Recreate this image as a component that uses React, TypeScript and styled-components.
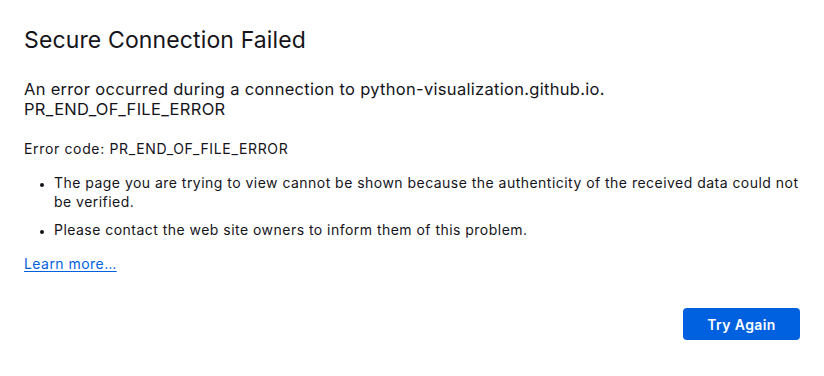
import React from "react";
import styled, { createGlobalStyle } from "styled-components";

const Global = createGlobalStyle`
  html, body { margin: 0; padding: 0; background: #ffffff; }
  body { font-family: Inter, "Noto Sans", "Liberation Sans", sans-serif; color: #15141a; }
`;

const Page = styled.main`
  box-sizing: border-box;
  width: 824px;
  height: 376px;
  padding: 24px 12px 0 24px;
  display: flex;
  flex-direction: column;
`;

const Title = styled.h1`
  margin: 0;
  font-size: 23px;
  font-weight: 400;
  line-height: 32px;
  letter-spacing: 0.13px;
`;

const Lead = styled.p`
  margin: 24px 0 0 0;
  font-size: 16.5px;
  line-height: 19.5px;
  font-weight: 400;
  letter-spacing: 0.3px;
`;

const Code = styled.p`
  margin: 21px 0 0 0;
  font-size: 14px;
  line-height: 18px;
  letter-spacing: 0.65px;
`;

const List = styled.ul`
  margin: 15px 0 0 0;
  padding: 0 0 0 30px;
  font-size: 14px;
  line-height: 19px;
  letter-spacing: 0.47px;
  display: flex;
  flex-direction: column;
  gap: 9px;
  li::marker { font-size: 11px; }
`;

const Item = styled.li`
  padding-left: 0;
`;

const Learn = styled.a`
  margin-top: 16px;
  align-self: flex-start;
  font-size: 14px;
  line-height: 18px;
  letter-spacing: 0.45px;
  color: #0061e0;
  text-decoration: underline;
  text-underline-offset: 2px;
  cursor: pointer;
`;

const Actions = styled.div`
  margin-top: 35px;
  margin-right: 12px;
  display: flex;
  justify-content: flex-end;
`;

const Button = styled.button`
  width: 117px;
  height: 32px;
  border: none;
  border-radius: 4px;
  background: #0061e0;
  color: #ffffff;
  font-family: Inter, "Noto Sans", sans-serif;
  font-size: 14px;
  font-weight: 600;
  letter-spacing: 0.4px;
  cursor: pointer;
`;

export default function App() {
  return (
    <>
      <Global />
      <Page>
        <Title>Secure Connection Failed</Title>
        <Lead>
          An error occurred during a connection to python-visualization.github.io.
          <br />
          PR_END_OF_FILE_ERROR
        </Lead>
        <Code>Error code: PR_END_OF_FILE_ERROR</Code>
        <List>
          <Item>
            The page you are trying to view cannot be shown because the authenticity of the received data could not be verified.
          </Item>
          <Item>Please contact the web site owners to inform them of this problem.</Item>
        </List>
        <Learn>Learn more…</Learn>
        <Actions>
          <Button>Try Again</Button>
        </Actions>
      </Page>
    </>
  );
}
